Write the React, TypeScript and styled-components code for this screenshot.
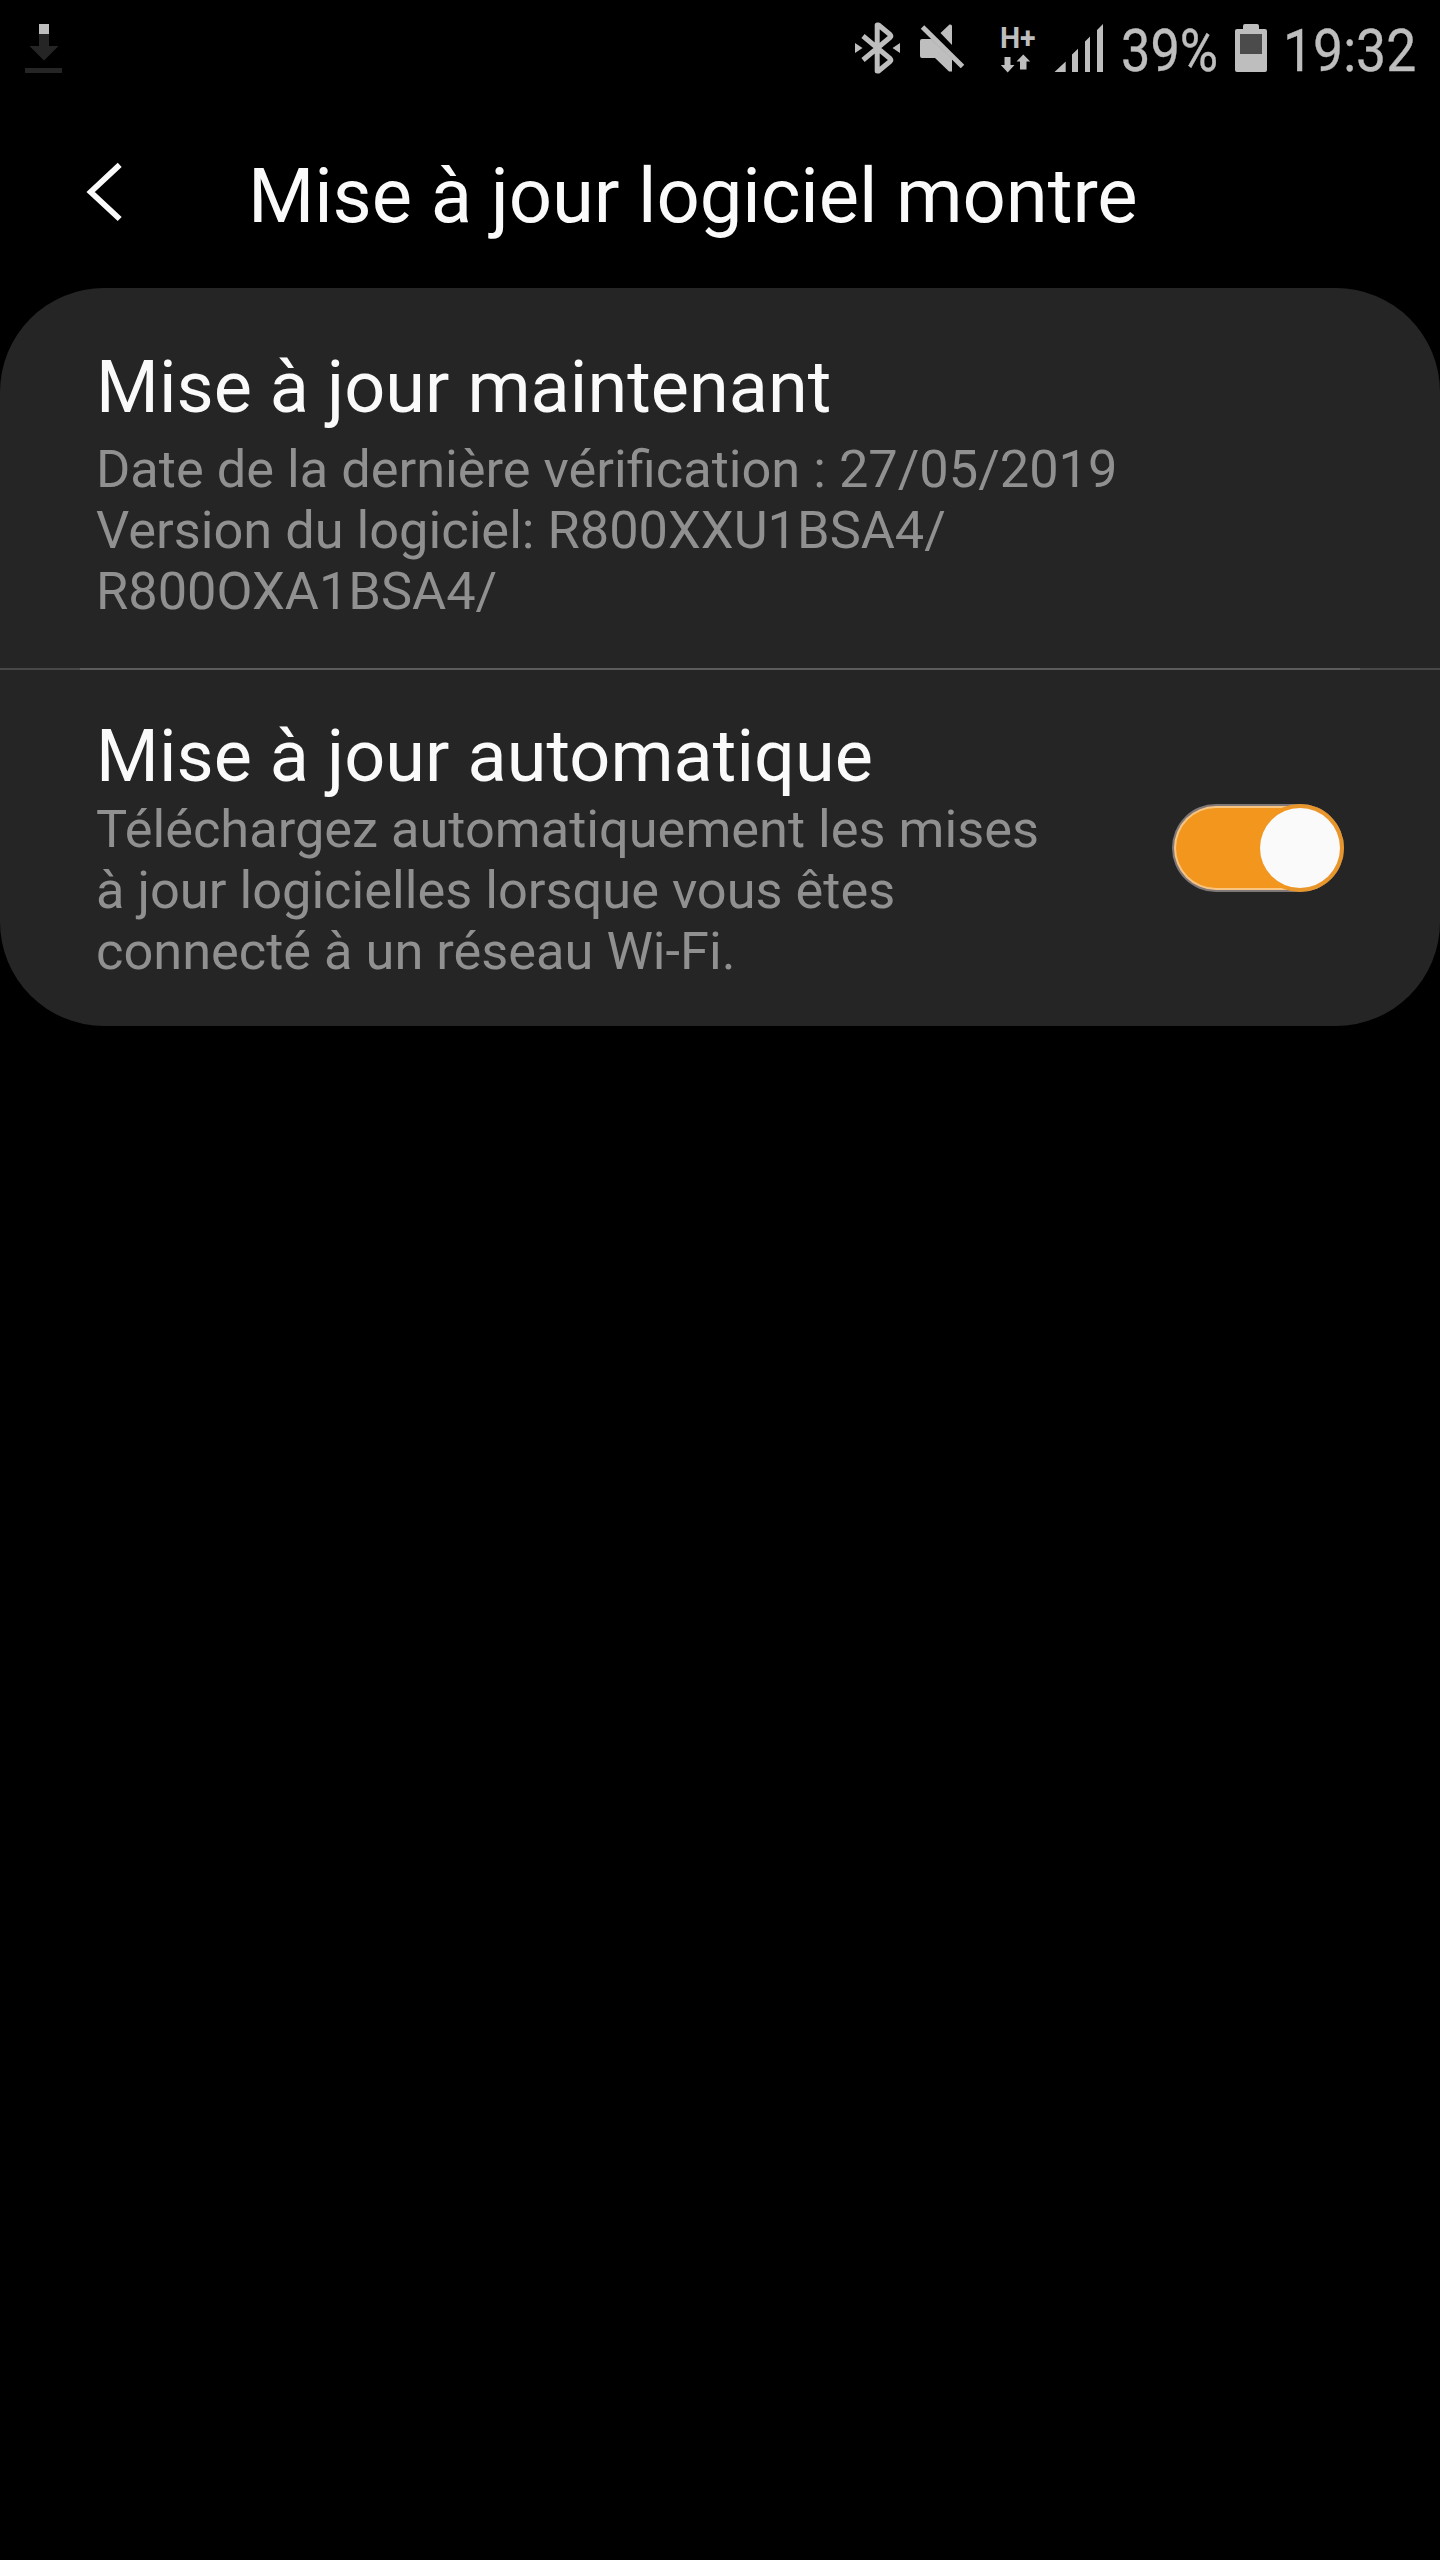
import React from 'react';
import styled, { createGlobalStyle } from 'styled-components';

const Global = createGlobalStyle`
  html, body { margin: 0; background: #000; }
  body { font-family: Roboto, "Liberation Sans", sans-serif; }
`;

const Screen = styled.div`
  width: 1440px;
  height: 2560px;
  background: #000;
  color: #fafafa;
  overflow: hidden;
`;

const StatusBar = styled.div`
  display: flex;
  align-items: flex-start;
  justify-content: space-between;
  box-sizing: border-box;
  height: 96px;
  padding: 22px 24px 0 24px;
  color: #bebebe;
`;

const StatusGroup = styled.div`
  display: flex;
  align-items: flex-start;
`;

const Icon = styled.svg<{ $gap?: number }>`
  display: block;
  flex: none;
  margin-left: ${(p) => p.$gap ?? 0}px;
`;

const Network = styled.div`
  display: flex;
  flex-direction: column;
  width: 36px;
  margin-left: 34px;
`;

const NetworkLabel = styled.span`
  height: 32px;
  font-size: 30px;
  font-weight: 700;
  line-height: 31px;
  white-space: nowrap;
  transform: scaleX(0.95);
  transform-origin: 0 0;
`;

const StatusText = styled.span<{ $gap: number; $width: number; $stretch: number }>`
  display: block;
  width: ${(p) => p.$width}px;
  margin-left: ${(p) => p.$gap}px;
  font-size: 60px;
  line-height: 70px;
  margin-top: -6px;
  white-space: nowrap;
  -webkit-text-stroke: 0.4px currentColor;
  transform: scaleX(${(p) => p.$stretch});
  transform-origin: 0 0;
`;

const Header = styled.header`
  display: flex;
  align-items: flex-start;
  box-sizing: border-box;
  height: 192px;
  padding: 56px 0 0 84px;
`;

const BackButton = styled.button`
  display: flex;
  align-items: flex-start;
  width: 164px;
  height: 80px;
  padding: 5px 0 0;
  border: 0;
  background: none;
  color: inherit;
`;

const Title = styled.h1`
  margin: 0;
  font-size: 76px;
  font-weight: 400;
  line-height: 89px;
  letter-spacing: -0.11px;
  white-space: nowrap;
`;

const Card = styled.main`
  height: 738px;
  border-radius: 104px;
  background: #252525;
  overflow: hidden;
`;

const Row = styled.section<{ $top: number; $bottom: number }>`
  display: flex;
  align-items: center;
  justify-content: space-between;
  padding: ${(p) => p.$top}px 96px ${(p) => p.$bottom}px;
`;

const RowTitle = styled.h2<{ $gap: number }>`
  margin: 0 0 ${(p) => p.$gap}px;
  font-size: 72px;
  font-weight: 400;
  line-height: 84px;
  letter-spacing: 0.05px;
  white-space: nowrap;
`;

const Description = styled.p`
  margin: 0;
  color: #909090;
  font-size: 52.35px;
  line-height: 61px;
  white-space: nowrap;
`;

const Divider = styled.div`
  box-sizing: border-box;
  height: 2px;
  padding: 0 80px;
  background: #484848;
`;

const DividerInner = styled.div`
  height: 2px;
  background: #5c5c5c;
`;

const Toggle = styled.svg`
  display: block;
  flex: none;
  margin-bottom: 1px;
`;

export default function App() {
  return (
    <>
      <Global />
      <Screen>
        <StatusBar>
          <StatusGroup>
            <Icon width="40" height="52" viewBox="24 22 40 52">
              <path d="M39 33h10v13h9.500L44 60.500 29.500 46H39zM25 68h37v5H25z" fill="#252525" />
              <path d="M39 24h10v10H39z" fill="#bebebe" />
            </Icon>
          </StatusGroup>
          <StatusGroup>
            <Icon width="46" height="52" viewBox="855 22 46 52">
              <path
                d="M863 36l27 22.500q1.500 1.500 0 3l-11.500 9.500h-1.300V25h1.300l11.500 9.500q1.500 1.500 0 3L863 60"
                fill="none"
                stroke="#bebebe"
                strokeWidth="5"
                strokeLinejoin="round"
              />
              <path d="M855 43l7.500 5-7.500 5zM900 43l-7.500 5 7.500 5z" fill="#bebebe" />
            </Icon>
            <Icon $gap={19} width="46" height="52" viewBox="920 22 46 52">
              <path d="M922 39h9.500L952 59v12.500h-3L935 58h-13q-2 0-2-2V41q0-2 2-2zM940.500 33l9-8.500q2.500-.5 2.500 1.500V45z" fill="#bebebe" />
              <path d="M922.500 27l40 39.500" stroke="#bebebe" strokeWidth="5" />
            </Icon>
            <Network>
              <NetworkLabel>H+</NetworkLabel>
              <Icon width="32" height="20" viewBox="1001 54 32 20">
                <path d="M1005.500 57h6v8h4l-6.800 7.500-6.900-7.500h3.700zM1021 69.500h6.500V61.500h3.700L1024.300 54.500 1017.500 61.500h3.500z" fill="#bebebe" />
              </Icon>
            </Network>
            <Icon $gap={18} width="50" height="52" viewBox="1054 22 50 52">
              <path d="M1054.500 72L1065.700 61.500V72zM1072 72V54.500l6-5.700V72zM1085 72V41.500l5-5V72zM1097 72V30l6-6V72z" fill="#bebebe" />
            </Icon>
            <StatusText $gap={17} $width={114} $stretch={0.872}>39%</StatusText>
            <Icon width="32" height="52" viewBox="1235 22 32 52">
              <path d="M1243 29v-3q0-2 2-2h12q2 0 2 2v3h6q2 0 2 2v39q0 2-2 2h-28q-2 0-2-2V31q0-2 2-2z" fill="#bebebe" />
              <path d="M1240 34h22v20h-22z" fill="#4b4b4b" />
            </Icon>
            <StatusText $gap={16} $width={133} $stretch={0.892}>19:32</StatusText>
          </StatusGroup>
        </StatusBar>
        <Header>
          <BackButton aria-label="Retour">
            <Icon width="40" height="66" viewBox="84 157 40 66">
              <path d="M119.700 164.800L90.700 192l29 27" fill="none" stroke="#fafafa" strokeWidth="5.800" />
            </Icon>
          </BackButton>
          <Title>Mise à jour logiciel montre</Title>
        </Header>
        <Card>
          <Row $top={58} $bottom={46}>
            <div>
              <RowTitle $gap={9}>Mise à jour maintenant</RowTitle>
              <Description>
                Date de la dernière vérification : 27/05/2019
                <br />
                Version du logiciel: R800XXU1BSA4/
                <br />
                R800OXA1BSA4/
              </Description>
            </div>
          </Row>
          <Divider>
            <DividerInner />
          </Divider>
          <Row $top={45} $bottom={44}>
            <div>
              <RowTitle $gap={0}>Mise à jour automatique</RowTitle>
              <Description>
                Téléchargez automatiquement les mises
                <br />à jour logicielles lorsque vous êtes
                <br />
                connecté à un réseau Wi-Fi.
              </Description>
            </div>
            <Toggle width="172" height="88" viewBox="0 0 172 88" role="switch" aria-checked="true">
              <rect width="172" height="88" rx="44" fill="#807777" />
              <rect x="2" y="2" width="168" height="84" rx="42" fill="#f8c583" />
              <rect x="4" y="4" width="164" height="80" rx="40" fill="#f2961d" />
              <circle cx="128" cy="44" r="44" fill="#e8962b" />
              <path d="M70 4h58a40 40 0 0 0 0 80H70z" fill="#f2961d" />
              <circle cx="128" cy="44" r="40" fill="#fafafa" />
            </Toggle>
          </Row>
        </Card>
      </Screen>
    </>
  );
}
